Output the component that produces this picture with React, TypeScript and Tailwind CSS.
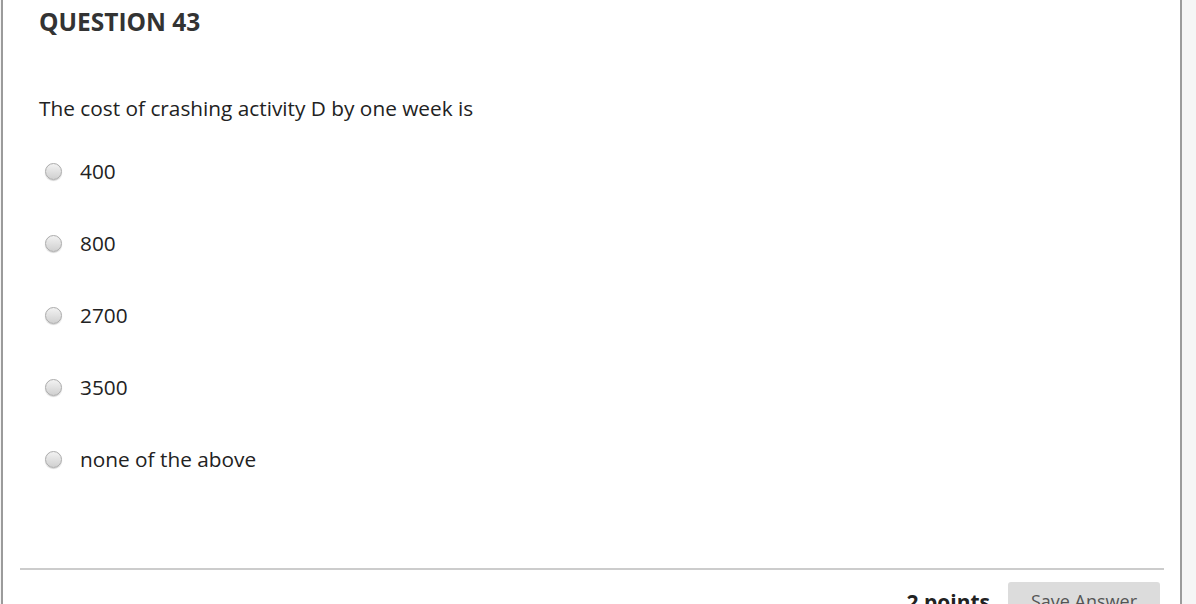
import React from "react";

const options = ["400", "800", "2700", "3500", "none of the above"];

function Radio() {
  return (
    <span className="block w-[17px] h-[17px] rounded-full border border-[#ababab] bg-gradient-to-b from-[#f2f2f2] to-[#d0d0d0] shadow-[0_1px_1px_rgba(0,0,0,0.18)] shrink-0" />
  );
}

export default function App() {
  return (
    <div
      className="w-[1196px] h-[604px] overflow-hidden bg-[#f5f5f5] text-[#333]"
      style={{ fontFamily: '"Open Sans", "Noto Sans", sans-serif' }}
    >
      <div className="ml-[1px] w-[1181px] h-[604px] overflow-hidden bg-white border-l-2 border-r-2 border-[#9b9b9b]">
        <h2 className="pl-[36px] pt-[6px] text-[24.5px] leading-[32px] font-bold text-[#333]">
          QUESTION 43
        </h2>
        <p className="pl-[36px] mt-[56px] text-[20.8px] leading-[28px] text-[#222]">
          The cost of crashing activity D by one week is
        </p>
        <div className="mt-[37px] flex flex-col gap-[48px]">
          {options.map((o) => (
            <div key={o} className="flex items-center h-[24px] pl-[42px]">
              <Radio />
              <span className="ml-[18px] text-[20.8px] leading-[24px] text-[#222]">{o}</span>
            </div>
          ))}
        </div>
        <div className="mt-[97px] ml-[17px] mr-[16px] h-[2px] bg-[#cccccc]" />
        <div className="flex justify-end items-start mr-[20px] mt-[12px]">
          <span className="text-[21px] leading-[24px] font-bold text-[#222] mt-[8px] mr-[18px]">2 points</span>
          <button className="w-[152px] h-[40px] rounded-[3px] bg-[#dcdcdc] text-[#555] text-[18px] leading-[24px] pt-[7px] flex justify-center items-start">
            Save Answer
          </button>
        </div>
      </div>
    </div>
  );
}
